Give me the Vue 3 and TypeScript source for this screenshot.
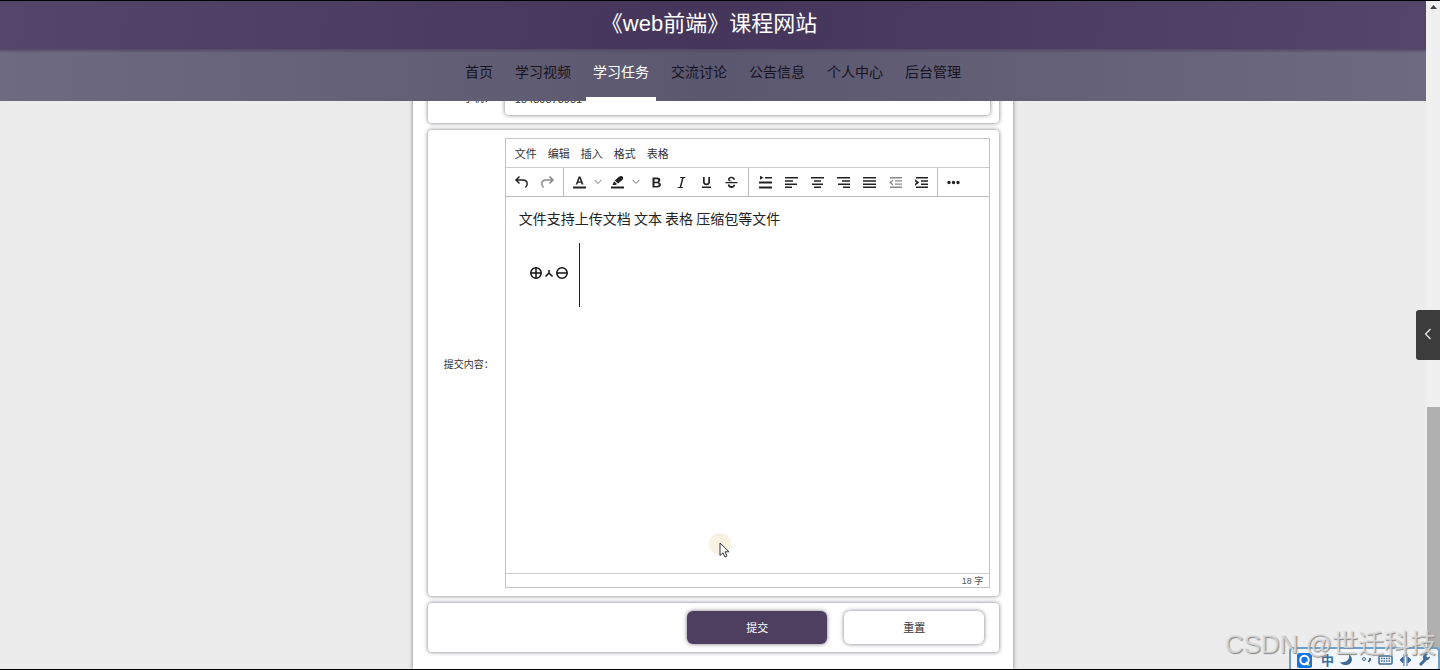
<script setup lang="ts">
import { ref } from 'vue'

interface Tool { name: string; dim?: boolean; d?: string; fill?: string; wide?: boolean }

const navItems: string[] = ['首页', '学习视频', '学习任务', '交流讨论', '公告信息', '个人中心', '后台管理']
const active = ref('学习任务')
const menus: string[] = ['文件', '编辑', '插入', '格式', '表格']
const phone = ref('18489873981')

const groups: Tool[][] = [
  [
    { name: '撤销', d: 'M5.500 1.500 2 5l3.500 3.500M2.500 5h6.500c4.500 0 5.500 4.500 2.500 7.500' },
    { name: '重做', dim: true, d: 'M9.500 1.500 13 5 9.500 8.500M12.500 5H6C1.500 5 .5 9.500 3.500 12.500' },
  ],
  [
    { name: '文字颜色', wide: true, fill: 'M1 11.500h13v2H1zM6.700 1.500h1.800l3 8H9.700l-.6-1.700H6L5.400 9.500H3.700zM6.500 6.400h2.100L7.600 3.300z' },
    { name: '背景颜色', wide: true, fill: 'M1 11.500h13v2H1zM2.500 10l1.500-3.800 3 2.900-1.300.9zM4.700 5.600l4.300-3.800q2-1.600 3.600-.2 1.300 1.500 0 3.100l-4.600 3.900z' },
    { name: '粗体', fill: 'M3.500 2.500h4.700c3.800 0 4 3.800 1.600 4.800 3.300.8 2.700 5.200-1.300 5.200h-5zM5.500 4.200v2.500h2.300c1.800 0 1.800-2.500 0-2.500zM5.500 8.300v2.600h2.700c2 0 2-2.600 0-2.600z' },
    { name: '斜体', fill: 'M6.200 2h5.200l-.2.900H9.600L7.200 12.100H9l-.2.900H3.600l.2-.9h1.900L8.100 2.900H6z' },
    { name: '下划线', fill: 'M4 2h1.700v4.700c0 2.400 3.600 2.400 3.600 0V2H11v5c0 4.300-7 4.300-7 0zM3 11.500h9V13H3z' },
    { name: '删除线', fill: 'M1.500 7h12v1.200h-12zM11 4.700H9.400C9 2.800 5.500 2.900 5.600 4.500c.1 1 1.600 1.300 3 1.700H5C2.600 3.500 5.300 1.800 7.500 1.800c2 0 3.400 1 3.500 2.900zM3.800 9.500h1.700c.4 2.200 4.200 2 4.100.3h1.600c0 2-1.600 3.200-3.700 3.200-2.200 0-3.700-1.300-3.700-3.500z' },
  ],
  [
    { name: '行高', fill: 'M1 6.500h13v2H1zM1 11.500h13v2H1zM7 2h7v1.600H7zM2 .8 5.500 2.800 2 4.800z' },
    { name: '左对齐', fill: 'M1 2h13v1.500H1zM1 5.200h8v1.500H1zM1 8.400h12v1.500H1zM1 11.500h7V13H1z' },
    { name: '居中对齐', fill: 'M1 2h13v1.500H1zM4 5.200h7v1.500H4zM2 8.400h11v1.500H2zM4 11.500h7V13H4z' },
    { name: '右对齐', fill: 'M1 2h13v1.500H1zM6 5.200h8v1.500H6zM2 8.400h12v1.500H2zM7 11.500h7V13H7z' },
    { name: '两端对齐', fill: 'M1 2h13v1.500H1zM1 5.200h13v1.500H1zM1 8.400h13v1.500H1zM1 11.500h13V13H1z' },
    { name: '减少缩进', dim: true, fill: 'M2 2h12v1.400H2zM7 5.200h7v1.400H7zM7 8.400h7v1.400H7zM2 11.500h12v1.400H2zM5 4.500v1.600L3.200 7.500 5 8.900v1.600L1 7.500z' },
    { name: '增加缩进', fill: 'M2 2h12v1.500H2zM7 5.200h7v1.500H7zM7 8.400h7v1.500H7zM2 11.500h12V13H2zM1 4.200 5.300 7.500 1 10.800V8.700L2.500 7.500 1 6.300z' },
  ],
  [{ name: '更多', fill: 'M1.300 7.500a1.700 1.700 0 1 0 3.400 0 1.700 1.700 0 1 0-3.400 0zM5.800 7.500a1.700 1.700 0 1 0 3.400 0 1.700 1.700 0 1 0-3.400 0zM10.300 7.500a1.700 1.700 0 1 0 3.400 0 1.700 1.700 0 1 0-3.400 0z' }],
]
</script>

<template>
  <div class="screen">
    <div class="page">
      <header class="site-header">
        <h1>《web前端》课程网站</h1>
        <nav>
          <a v-for="item in navItems" :key="item" href="#" :class="{ active: item === active }" @click.prevent="active = item">{{ item }}</a>
        </nav>
      </header>

      <form class="sheet" @submit.prevent>
        <div class="card">
          <label class="label" for="phone">手机：</label>
          <input id="phone" v-model="phone" class="field" type="text">
        </div>

        <div class="card grow">
          <span id="content-label" class="label">提交内容：</span>
          <div class="editor">
            <div class="menubar">
              <button v-for="m in menus" :key="m" type="button">{{ m }}</button>
            </div>
            <div class="toolbar">
              <div v-for="(g, i) in groups" :key="i" class="group">
                <button v-for="t in g" :key="t.name" type="button" :aria-label="t.name" :class="{ dim: t.dim, wide: t.wide }">
                  <svg width="15" height="15" viewBox="0 0 15 15">
                    <path v-if="t.d" :d="t.d" fill="none" stroke="currentColor" stroke-width="1.5" />
                    <path v-else :d="t.fill" fill="currentColor" fill-rule="evenodd" />
                  </svg>
                  <svg v-if="t.wide" class="chevron" width="8" height="6" viewBox="0 0 8 6">
                    <path d="M.7 1 4 4.500 7.300 1" fill="none" stroke="currentColor" />
                  </svg>
                </button>
              </div>
            </div>
            <div class="body" contenteditable="true" role="textbox" aria-labelledby="content-label">
              <p>文件支持上传文档 文本 表格 压缩包等文件</p>
              <div class="formula">
                <svg width="40" height="14" viewBox="0 0 40 14" fill="none" stroke="#111" stroke-width="1.5">
                  <circle cx="7" cy="7" r="5.200" /><path d="M7 2v10M2 7h10" />
                  <path d="M20 4v3.500M20 7l-3.500 3.500M20 7l3.500 3.500" />
                  <circle cx="33" cy="7" r="5.200" /><path d="M28 7h10" />
                </svg>
              </div>
            </div>
            <div class="status">18 字</div>
          </div>
        </div>

        <div class="card actions">
          <button class="btn primary" type="submit">提交</button>
          <button class="btn" type="reset">重置</button>
        </div>
      </form>
    </div>

    <div class="scrollbar">
      <svg width="7" height="4" viewBox="0 0 7 4"><path d="M0 4 3.500 0 7 4z" fill="#444" /></svg>
      <div class="thumb"></div>
    </div>

    <button class="drawer" type="button" aria-label="展开">
      <svg width="8" height="12" viewBox="0 0 8 12"><path d="M6.500 1 1.500 6l5 5" fill="none" stroke="#eee" stroke-width="1.200" /></svg>
    </button>

    <svg class="cursor" width="26" height="28" viewBox="0 0 26 28">
      <circle cx="12" cy="12" r="11" fill="#f8f2e3" />
      <path d="M12 11v12.500l3-2.700 2 4.200 2-1-2-4.200h4z" fill="#fff" stroke="#333" />
    </svg>

    <div class="ime">
      <svg width="146" height="18" viewBox="0 0 146 18" fill="none" stroke="#3d6a97" stroke-width="2">
        <rect x="4" y="2" width="15" height="15" rx="2.500" fill="#1673e6" stroke="none" />
        <circle cx="11.500" cy="9" r="4.200" stroke="#fff" /><path d="m13 11 2.500 3" stroke="#fff" />
        <circle cx="16" cy="14" r="1" fill="#8ee02c" stroke="none" />
        <path d="M56 3c6 5 2 12-4 11-2 0-4-1-5-3 6 1 10-2 9-8z" fill="#3d6a97" stroke="none" />
        <circle cx="71" cy="8" r="1.500" stroke-width="1" /><path d="M77 7v2l-1.500 2" />
        <rect x="86" y="5" width="13" height="8" rx="1" stroke-width="1.500" /><path d="M88 7.500h9M88 10h9" stroke-width="1.500" stroke-dasharray="1.500 1" />
        <path d="M111 3v12M114 3v12M107 9l3-3v6zM118 9l-3-3v6z" fill="#3d6a97" stroke-width="1" />
        <path d="m127 14 5-5" stroke-width="3" /><path d="M137 5.500c0 5-8 6-7 0 1-3 3-3.500 5-2.500l-2 2 1.500 1.500z" fill="#3d6a97" stroke="none" />
      </svg>
      <span>中</span>
    </div>
    <div class="watermark">CSDN @世迁科技</div>
  </div>
</template>

<style>
body { margin: 0; }
</style>

<style scoped>
* { box-sizing: border-box; }
.screen {
  position: relative;
  display: flex;
  height: 100vh;
  overflow: hidden;
  border-top: 1px solid #000;
  border-bottom: 1px solid #000;
  background: #ececec;
  color: #333;
  font-family: "Liberation Sans", "Noto Sans CJK SC", sans-serif;
}
button { padding: 0; border: 0; background: none; color: inherit; font: inherit; }
.page { position: relative; flex: 1; display: flex; flex-direction: column; padding-top: 61px; }
.site-header { position: absolute; z-index: 2; top: 0; left: 0; right: 0; }
h1 {
  margin: 0;
  height: 48px;
  padding-right: 8px;
  line-height: 45px;
  text-align: center;
  font-size: 22px;
  font-weight: 400;
  color: #fff;
  background: linear-gradient(100deg, #54456a, #45355a 50%, #54456a);
}
nav {
  display: flex;
  justify-content: center;
  gap: 8px;
  height: 52px;
  background: linear-gradient(#54486a, transparent 4px), linear-gradient(90deg, #6e6b80, #5b576e 50%, #6e6b80);
}
nav a {
  padding: 0 7px;
  line-height: 47px;
  font-size: 14px;
  color: #16131f;
  text-decoration: none;
  border-bottom: 4px solid transparent;
}
nav a.active { color: #fff; border-color: #fff; }
.sheet {
  flex: 1;
  display: flex;
  flex-direction: column;
  gap: 7px;
  width: 42.1%;
  margin: 0 auto;
  padding: 10px 14px 17px 15px;
  background: #fff;
  box-shadow: 0 0 4px #777;
}
.card {
  display: flex;
  align-items: center;
  padding: 8px 9px 8px 0;
  border-radius: 4px;
  background: #fff;
  box-shadow: 0 0 4px #77747f;
}
.card.grow { flex: 1; }
.label { flex: 0 0 77px; padding-right: 11px; text-align: right; font-size: 10px; }
.field {
  flex: 1;
  min-width: 0;
  height: 35px;
  padding: 2px 10px 0;
  border: 0;
  border-radius: 4px;
  outline: 0;
  color: #333;
  font: 11px "Liberation Sans", sans-serif;
  box-shadow: 0 0 4px #77747f;
}
.editor { flex: 1; align-self: stretch; display: flex; flex-direction: column; border: 1px solid #c4c4c4; }
.menubar { display: flex; gap: 11px; height: 29px; padding-left: 9px; font-size: 11px; border-bottom: 1px solid #ccc; }
.toolbar { display: flex; height: 29px; border-bottom: 1px solid #bbb; color: #222f3e; }
.group { display: flex; align-items: center; gap: 1px; padding: 0 3px; border-right: 1px solid #bbb; }
.group:nth-child(2) { gap: 0; padding: 0 4px; }
.group:nth-child(3) { padding-left: 4px; }
.group:last-child { border: 0; }
.group button { display: flex; align-items: center; justify-content: center; width: 25px; height: 26px; color: #222; }
.group button.wide { width: 38px; gap: 7px; }
.group button.dim { color: #888; }
.chevron { color: #777; }
.body { flex: 1; padding: 12px 13px; outline: 0; color: #222; }
.body p { margin: 0 0 16px; font-family: "Noto Sans CJK SC", sans-serif; font-size: 14px; line-height: 18px; }
.formula { display: flex; align-items: center; width: 61px; height: 64px; padding: 0 0 4px 10px; border-right: 1px solid #222; }
.status { height: 14px; padding-right: 6px; border-top: 1px solid #ccc; text-align: right; font-size: 9px; line-height: 15px; color: #555; }
.actions { justify-content: flex-end; gap: 17px; padding-right: 15px; }
.btn { width: 140px; height: 33px; padding-bottom: 2px; border-radius: 6px; font-size: 11px; box-shadow: 0 0 4px #77747f; }
.btn.primary { background: #4e3f60; color: #fff; }
.scrollbar { display: flex; flex-direction: column; align-items: center; justify-content: space-between; flex: 0 0 14px; padding-top: 4px; background: #f0f0f0; }
.thumb { align-self: stretch; height: 39.400%; margin-left: 1px; background: #b0b0b0; }
.drawer { position: absolute; top: 309px; right: 0; width: 24px; height: 50px; border-radius: 3px 0 0 3px; background: #3c3c3c; }
.cursor { position: absolute; left: 708px; top: 531px; }
.ime { position: absolute; right: 0; bottom: 0; width: 151px; height: 22px; padding: 2px 2px 0; border: 2px solid #6ca0cc; border-bottom: 0; border-radius: 4px 4px 0 0; background: #f3f7fb; }
.ime span { position: absolute; left: 30px; bottom: 1px; font-size: 13px; line-height: 14px; font-weight: 700; color: #3d6a97; }
.watermark { position: absolute; right: 4px; bottom: 12px; font-size: 26px; line-height: 26px; white-space: nowrap; color: rgba(225, 225, 225, 0.800); text-shadow: 1px 1px 1px #888; }
</style>
